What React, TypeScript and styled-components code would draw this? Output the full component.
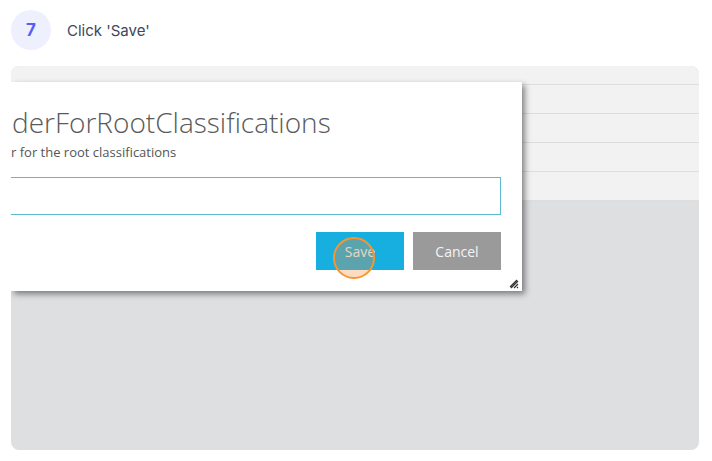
import React from 'react';
import styled, { createGlobalStyle } from 'styled-components';

const GlobalStyle = createGlobalStyle`
  body {
    margin: 0;
    background: #ffffff;
    font-family: Inter, 'Noto Sans', sans-serif;
  }
`;

const Page = styled.div`
  width: 712px;
  height: 461px;
  padding: 10px 13px 0 11px;
  box-sizing: border-box;
`;

const StepHeader = styled.div`
  display: flex;
  align-items: center;
  gap: 16px;
  height: 40px;
`;

const StepBadge = styled.div`
  width: 40px;
  height: 40px;
  border-radius: 50%;
  background: #eef0fe;
  color: #5a5ff0;
  font-weight: 700;
  font-size: 17px;
  display: flex;
  align-items: center;
  justify-content: center;
`;

const StepTitle = styled.div`
  font-size: 15px;
  color: #40465c;
`;

const Frame = styled.div`
  position: relative;
  margin-top: 16px;
  height: 384px;
  border-radius: 8px;
  background: #dedfe1;
  overflow: hidden;
  display: flex;
  flex-direction: column;
`;

const TopStrip = styled.div`
  height: 18px;
  background: #f2f2f2;
  border-bottom: 1px solid #dddddd;
`;

const Row = styled.div`
  height: 28px;
  background: #f2f2f2;
  border-bottom: 1px solid #dddddd;
  &:last-child {
    border-bottom: none;
  }
`;

const Dialog = styled.div`
  position: absolute;
  left: 0;
  top: 16px;
  width: 511px;
  height: 209px;
  box-sizing: border-box;
  padding: 23px 21px 21px 0;
  background: #ffffff;
  box-shadow: 3px 3px 6px rgba(0, 0, 0, 0.45);
  font-family: 'Open Sans', 'Noto Sans', sans-serif;
  display: flex;
  flex-direction: column;
`;

const DialogTitle = styled.div`
  font-size: 28px;
  font-weight: 300;
  line-height: 35px;
  color: #5a5a5a;
  white-space: nowrap;
  margin-left: 1px;
`;

const DialogSub = styled.div`
  margin-top: 4px;
  font-size: 13px;
  line-height: 16px;
  color: #555555;
  white-space: nowrap;
`;

const Field = styled.div`
  margin-top: 17px;
  height: 38px;
  box-sizing: border-box;
  border: 1px solid #5cb9d3;
  border-left: none;
`;

const Actions = styled.div`
  margin-top: 17px;
  display: flex;
  justify-content: flex-end;
  gap: 9px;
`;

const Button = styled.div<{ $primary?: boolean }>`
  position: relative;
  width: 88px;
  height: 38px;
  display: flex;
  align-items: center;
  justify-content: center;
  font-size: 14px;
  color: ${(p) => (p.$primary ? '#e4f3f7' : '#f4f4f4')};
  background: ${(p) => (p.$primary ? '#17afe0' : '#9a9a9b')};
`;

const ClickMark = styled.div`
  position: absolute;
  left: 17px;
  top: 5px;
  width: 42px;
  height: 42px;
  box-sizing: border-box;
  border-radius: 50%;
  border: 2px solid #f7952f;
  background: rgba(247, 140, 60, 0.3);
`;

const Grip = styled.svg`
  position: absolute;
  right: 3px;
  bottom: 2px;
`;

export default function App() {
  return (
    <>
      <GlobalStyle />
      <Page>
        <StepHeader>
          <StepBadge>7</StepBadge>
          <StepTitle>Click 'Save'</StepTitle>
        </StepHeader>
        <Frame>
          <TopStrip />
          <Row />
          <Row />
          <Row />
          <Row />
          <Dialog>
            <DialogTitle>derForRootClassifications</DialogTitle>
            <DialogSub>r for the root classifications</DialogSub>
            <Field />
            <Actions>
              <Button $primary>
                Save
                <ClickMark />
              </Button>
              <Button>Cancel</Button>
            </Actions>
            <Grip width="10" height="10" viewBox="0 0 10 10">
              <path d="M9 2 L2 9 M9 5 L5 9 M9 8 L8 9 M8 1 L1 8" stroke="#333" strokeWidth="1.2" />
            </Grip>
          </Dialog>
        </Frame>
      </Page>
    </>
  );
}
